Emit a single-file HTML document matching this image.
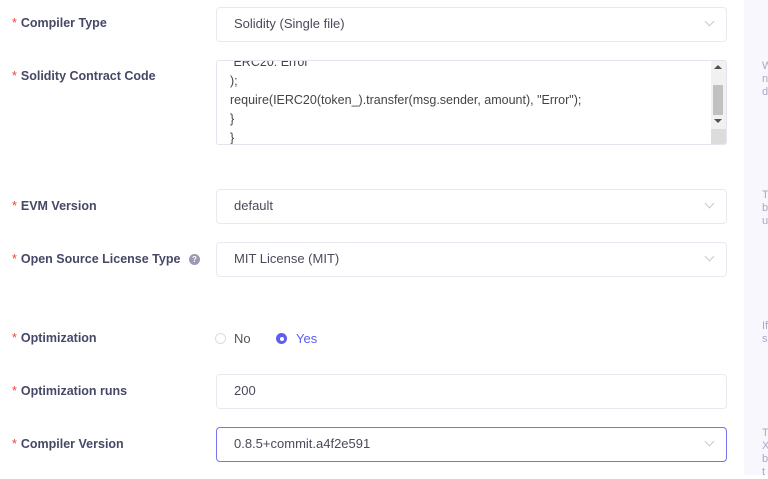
<!DOCTYPE html>
<html><head><style>
body{margin:0;width:768px;height:475px;overflow:hidden;background:#fff;font-family:"Liberation Sans",sans-serif;position:relative}
.side{position:absolute;left:744px;top:0;width:24px;height:475px;background:#f8f7fd}
.st{position:absolute;left:762px;font-size:11px;line-height:13px;color:#a9a8c2}
.lab{position:absolute;left:12px;font-size:12.5px;font-weight:bold;color:#464866}
.lab b{color:#e8443a;font-weight:normal;margin-right:4px}
.in{position:absolute;left:216px;width:511px;height:35px;border:1px solid #e9e9f2;border-radius:4px;box-sizing:border-box;font-size:13px;color:#4a4a5a;line-height:32px;padding-left:17px}
.ch{position:absolute;right:13px;top:10px;width:6px;height:6px;border-right:1px solid #c8c8d4;border-bottom:1px solid #c8c8d4;transform:rotate(45deg)}
.ta{position:absolute;left:216px;top:60px;width:511px;height:85px;border:1px solid #e4e4ee;border-radius:3px;box-sizing:border-box;overflow:hidden;font-size:12.5px;color:#444;line-height:19px}
.ta div{padding-left:13px}
</style></head><body>
<div class="side"></div>
<div class="st" style="top:60px">W<br>n<br>d</div>
<div class="st" style="top:189px">T<br>b<br>u</div>
<div class="st" style="top:320px">If<br>s</div>
<div class="st" style="top:427px">T<br>X<br>b<br>t</div>

<div class="lab" style="top:16px"><b>*</b>Compiler Type</div>
<div class="in" style="top:7px">Solidity (Single file)<span class="ch"></span></div>

<div class="lab" style="top:69px"><b>*</b>Solidity Contract Code</div>
<div class="ta">
<div style="margin-top:-8px">&nbsp;ERC20: Error</div>
<div>);</div>
<div>require(IERC20(token_).transfer(msg.sender, amount), "Error");</div>
<div>}</div>
<div>}</div>
<div style="position:absolute;right:0;top:0;width:15px;height:85px;background:#f1f1f1;padding:0"></div>
<div style="position:absolute;right:3px;top:24px;width:10px;height:30px;background:#c1c1c1;padding:0"></div>
<div style="position:absolute;right:4px;top:4px;width:0;height:0;border:4px solid transparent;border-bottom:4px solid #505050;border-top:0;padding:0"></div>
<div style="position:absolute;right:4px;top:58px;width:0;height:0;border:4px solid transparent;border-top:4px solid #505050;border-bottom:0;padding:0"></div>
<div style="position:absolute;right:0;bottom:0;width:15px;height:15px;background:#dcdcdc;padding:0"></div>
</div>

<div class="lab" style="top:199px"><b>*</b>EVM Version</div>
<div class="in" style="top:189px">default<span class="ch"></span></div>

<div class="lab" style="top:252px"><b>*</b>Open Source License Type <span style="display:inline-block;width:11px;height:11px;border-radius:50%;background:#9a9ab0;color:#fff;font-size:8px;line-height:11px;text-align:center;margin-left:5px;vertical-align:1px">?</span></div>
<div class="in" style="top:242px">MIT License (MIT)<span class="ch"></span></div>

<div class="lab" style="top:331px"><b>*</b>Optimization</div>
<div style="position:absolute;left:215px;top:333px;width:9px;height:9px;border:1px solid #ddd;border-radius:50%"></div>
<div style="position:absolute;left:234px;top:331px;font-size:13px;color:#555">No</div>
<div style="position:absolute;left:276px;top:333px;width:11px;height:11px;border-radius:50%;background:#5f5ef0"><div style="margin:3.5px;width:4px;height:4px;border-radius:50%;background:#fff"></div></div>
<div style="position:absolute;left:296px;top:331px;font-size:13px;color:#5f5ef0">Yes</div>

<div class="lab" style="top:384px"><b>*</b>Optimization runs</div>
<div class="in" style="top:374px">200</div>

<div class="lab" style="top:437px"><b>*</b>Compiler Version</div>
<div class="in" style="top:427px;border-color:#7a72ee">0.8.5+commit.a4f2e591<span class="ch"></span></div>
</body></html>
